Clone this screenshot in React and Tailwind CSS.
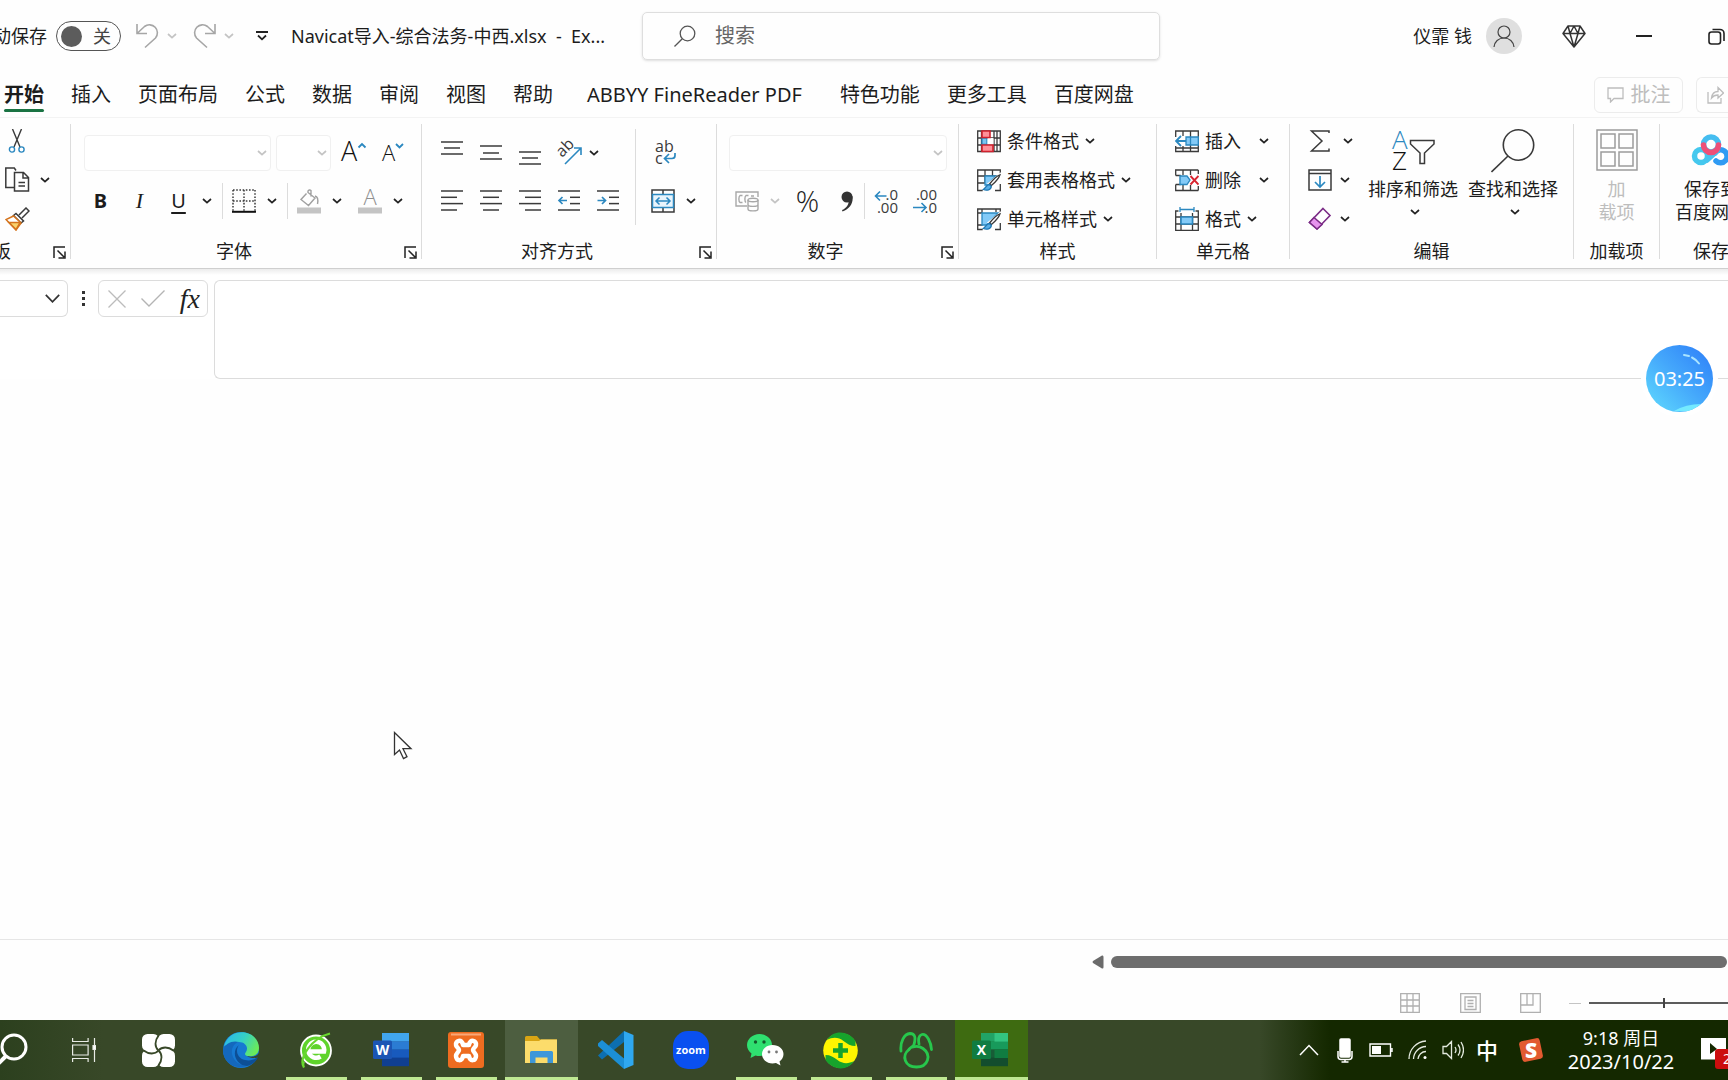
import React from "react";

const BLUE = "#2b88c0";
const INK = "#3a3a3a";

const tabs = ["插入", "页面布局", "公式", "数据", "审阅", "视图", "帮助"];
const moreTabs = ["特色功能", "更多工具", "百度网盘"];

function Chev({ className = "text-[#222]" }) {
  return (
    <svg width="10" height="6" viewBox="0 0 10 6" fill="none" className={className}>
      <path d="M1 1l4 3.6L9 1" stroke="currentColor" strokeWidth="1.7" />
    </svg>
  );
}

function IconButton({ label, className = "w-[39px]", children }) {
  return (
    <button aria-label={label} className={`flex h-9 shrink-0 items-center justify-center ${className}`}>
      {children}
    </button>
  );
}

function ChevButton({ label = "更多选项", className = "w-[18px]", light }) {
  return (
    <IconButton label={label} className={className}>
      <Chev className={light ? "text-[#c4c4c4]" : "text-[#222]"} />
    </IconButton>
  );
}

function Combo({ label, className }) {
  return (
    <div className={`relative h-9 shrink-0 ${className}`}>
      <select aria-label={label} className="h-full w-full appearance-none rounded border border-[#f0f0f0] bg-white" />
      <Chev className="pointer-events-none absolute top-[15px] right-1 text-[#c4c4c4]" />
    </div>
  );
}

function Launcher() {
  return (
    <button aria-label="对话框启动器" className="absolute right-1 bottom-[5px]">
      <svg width="13" height="13" viewBox="0 0 13 13" fill="none" stroke="#222" strokeWidth="1.5">
        <path d="M1 12V1h11M4.5 4.5l6.5 6.5M12 5.5V12H5.5" />
      </svg>
    </button>
  );
}

function Group({ name, className, labelClass = "justify-center", launcher, last, children }) {
  return (
    <>
      <section className={`relative flex h-[146px] shrink-0 flex-col ${className}`}>
        <div className="h-[120px] pt-[3px]">{children}</div>
        <div className={`flex h-[26px] items-center text-lg leading-none whitespace-nowrap ${labelClass}`}>{name}</div>
        {launcher && <Launcher />}
      </section>
      {!last && <div className="mt-[6px] h-[135px] w-px shrink-0 bg-[#dcdcdc]" />}
    </>
  );
}

function InnerSep({ className = "ml-[5px] h-9" }) {
  return <div className={`mr-px w-px shrink-0 bg-[#dcdcdc] ${className}`} />;
}

// horizontal rules, each given as [x1, x2, y]
function Lines({ rows, children }) {
  return (
    <svg width="24" height="24" viewBox="0 0 24 24" fill="none" stroke={INK} strokeWidth="1.5">
      {rows.map(([a, b, y]) => (
        <path key={y} d={`M${a} ${y}H${b}`} />
      ))}
      {children}
    </svg>
  );
}

function TableIcon({ kind }) {
  return (
    <svg width="24" height="24" viewBox="0 0 24 24" fill="none" stroke={INK} strokeWidth="1.3">
      {kind === "cond" && (
        <>
          <path d="M.7 2h22.6v20.5H.7zM.7 9h22.6M.7 16h22.6M4.5 2v20.5M17 2v20.5M20 2v20.5" />
          <path d="M5 9h5v6.5H5z" fill="#7cc4ee" stroke={BLUE} />
          <path d="M10.5 9h6v6.5h-6z" fill="#fff" stroke="none" />
          <path d="M5 2h8v6.5H5zM5 16h11v6.5H5z" fill="#ff9098" stroke="#d0222e" strokeWidth="1.6" />
        </>
      )}
      {(kind === "table" || kind === "cell") && (
        <>
          <path d="M23.3 8V2H.7v20.5h5M18 22.5h5.3V16" />
          {kind === "table" ? (
            <>
              <path d="M.7 8h22.6M.7 15h8M8 2v13M15.5 2v6" />
              <path d="M8 8h11l-9 9H8z" fill="#83caf7" stroke={BLUE} />
            </>
          ) : (
            <>
              <path d="M.7 6h4M.7 18h5M5 2v4M19 2v3" />
              <path d="M5 6h16L10 18H5z" fill="#83caf7" stroke={BLUE} />
            </>
          )}
          <path d="M23.5 6.5L12 16l3 3.5 8.5-10z" fill="#fff" stroke="#fff" strokeWidth="3" />
          <path d="M23 6.8c-3 1-8 6-10.4 9.2l1.8 1.6C17.5 15 22 10 23 6.8z" fill="#fff" />
          <path d="M12.3 16.5c-3 0-2.8 3-6 5 3.5 1.5 8 .5 8-3.2z" fill="#58aee6" stroke="#1f78b4" />
        </>
      )}
      {kind === "insert" && (
        <>
          <path d="M.7 8V2h22.6v20.5H.7V17M.7 19h22M8 2v5M8 17v5.5M15.5 2v20.5" />
          <path d="M11 8h12.3v8H11z" fill="#83caf7" stroke={BLUE} />
          <path d="M15.5 8v8" stroke={BLUE} />
          <path d="M11 12H1.5M6 7l-5 5 5 5" stroke={BLUE} strokeWidth="1.8" />
        </>
      )}
      {kind === "delete" && (
        <>
          <path d="M.7 7.5V2h22.6M.7 7.5h5M.7 16.5h5M.7 16.5v6h22.6M8 2v5M15.5 2v5M8 17v5.5M15.5 17v5.5M23.3 2v4M23.3 18v4.5M5.500 7.5v9" />
          <path d="M5 8h7l3 4-3 4.5H5z" fill="#83caf7" stroke={BLUE} />
          <path d="M15.500 8l8 8.5M23.5 8l-8 8.5" stroke="#d8232f" strokeWidth="1.9" />
        </>
      )}
      {kind === "format" && (
        <>
          <path d="M3.5 4H.7v19.300h22.600V4h-2.800M.7 10h22.6M.7 17h22.6M6 6v17M17.5 6v17" />
          <path d="M6 10h11.5v7H6z" fill="#83caf7" stroke={BLUE} strokeWidth="1.6" />
          <path d="M5 2.500h14M5 0v5M19 0v5" stroke={BLUE} />
        </>
      )}
    </svg>
  );
}

function SmallCommand({ kind, text, wide }) {
  return (
    <button className="flex h-[39px] items-center gap-[6px] text-lg leading-none whitespace-nowrap">
      <TableIcon kind={kind} />
      {text}
      <Chev className={wide ? "ml-3 text-[#222]" : "text-[#222]"} />
    </button>
  );
}

function TitleBar() {
  return (
    <header className="flex h-[72px] shrink-0 items-center overflow-hidden">
      <div className="flex w-[642px] shrink-0 items-center">
        <label htmlFor="autosave" className="flex w-[47px] shrink-0 justify-end overflow-hidden text-lg whitespace-nowrap">
          自动保存
        </label>
        <button
          id="autosave"
          role="switch"
          aria-checked="false"
          className="ml-[9px] flex h-[30px] w-[65px] shrink-0 items-center justify-between rounded-full border border-[#555] pr-[9px] pl-1 text-lg leading-none text-[#444]"
        >
          <span className="size-[21px] rounded-full bg-[#5c5c5c]" />关
        </button>
        <IconButton label="撤消" className="ml-[14px] w-6">
          <svg width="24" height="26" viewBox="0 0 24 26" fill="none" stroke="#a6a6a6" strokeWidth="1.6">
            <path d="M2 1v9.500h10M2 10.500L9.500 3.500a8 8 0 0 1 11 11.500L10 24.500" />
          </svg>
        </IconButton>
        <ChevButton light className="ml-1 w-[18px]" />
        <IconButton label="恢复" className="ml-3 w-6">
          <svg width="24" height="26" viewBox="0 0 24 26" fill="none" stroke="#a6a6a6" strokeWidth="1.6">
            <path d="M22 1v9.500H12M22 10.500L14.500 3.500a8 8 0 0 0-11 11.500L14 24.500" />
          </svg>
        </IconButton>
        <ChevButton light className="ml-[3px] w-[18px]" />
        <IconButton label="自定义快速访问工具栏" className="ml-3 w-6">
          <svg width="12" height="10" viewBox="0 0 12 10" fill="none" stroke="#222" strokeWidth="1.8">
            <path d="M0 1h12M2 4.500l4 3.800 4-3.800" />
          </svg>
        </IconButton>
        <h1 className="ml-[17px] text-lg whitespace-pre">Navicat导入-综合法务-中西.xlsx  -  Ex...</h1>
      </div>
      <label className="flex h-12 w-[518px] shrink-0 items-center rounded-[5px] border border-[#dedede] pl-[31px] shadow-sm">
        <svg width="22" height="22" viewBox="0 0 22 22" fill="none" stroke="#555" strokeWidth="1.3">
          <circle cx="13.5" cy="8.5" r="7.3" />
          <path d="M8.300 13.700L.5 21.500" />
        </svg>
        <input aria-label="搜索" placeholder="搜索" className="ml-[19px] w-96 text-xl outline-none placeholder:text-[#666]" />
      </label>
      <div className="-mr-1 flex flex-1 items-center justify-end">
        <button className="flex shrink-0 items-center gap-[14px] text-lg whitespace-nowrap">
          仪霏 钱
          <span className="flex size-9 items-center justify-center rounded-full bg-[#dfdfdf]">
            <svg width="22" height="24" viewBox="0 0 22 24" fill="none" stroke="#444" strokeWidth="1.2">
              <circle cx="11" cy="8" r="6" />
              <path d="M1 23c.5-5.500 4.500-9 10-9s9.500 3.500 10 9" />
            </svg>
          </span>
        </button>
        <IconButton label="会员" className="ml-8 w-10">
          <svg width="24" height="23" viewBox="0 0 24 23" fill="none" stroke="#333" strokeWidth="1.5" strokeLinejoin="round">
            <path d="M6 1h12l5 7.500L12 22 1 8.500zM1 8.500h22M6 1l2 7.500L12 22l4-13.500L18 1M8 8.500L12 1l4 7.500" />
          </svg>
        </IconButton>
        <IconButton label="最小化" className="ml-[34px] w-8">
          <span className="h-[2px] w-4 bg-[#222]" />
        </IconButton>
        <IconButton label="还原" className="ml-10 w-8">
          <svg width="17" height="17" viewBox="0 0 17 17" fill="none" stroke="#222" strokeWidth="1.6">
            <rect x="1" y="4" width="11.5" height="12" rx="2.5" />
            <path d="M4.500 1.500h7.500a4 4 0 0 1 4 4V13" />
          </svg>
        </IconButton>
      </div>
    </header>
  );
}

function TabBar() {
  return (
    <nav className="flex h-[46px] shrink-0 items-center overflow-hidden border-b border-[#f3f3f3] pl-1 text-xl whitespace-nowrap">
      <div className="flex gap-[27px]">
        <button className="relative font-bold">
          开始
          <span className="absolute inset-x-0 -bottom-[3px] h-[3px] rounded-full bg-[#1a7343]" />
        </button>
        {tabs.map((t) => (
          <button key={t}>{t}</button>
        ))}
      </div>
      <button className="mr-[38px] ml-[34px]">ABBYY FineReader PDF</button>
      <div className="flex gap-[27px]">
        {moreTabs.map((t) => (
          <button key={t}>{t}</button>
        ))}
      </div>
      <div className="ml-auto flex gap-[13px] text-[#bdbdbd]">
        <button className="flex h-9 w-[89px] items-center justify-center gap-[7px] rounded-md border border-[#ececec]">
          <svg width="17" height="16" viewBox="0 0 17 16" fill="none" stroke="currentColor" strokeWidth="1.3">
            <path d="M1 1h15v10.500H7L3.500 15v-3.500H1z" />
          </svg>
          批注
        </button>
        <button aria-label="共享" className="flex h-9 w-8 items-center justify-end rounded-l-md border border-r-0 border-[#ececec] pr-1">
          <svg width="17" height="18" viewBox="0 0 17 18" fill="none" stroke="currentColor" strokeWidth="1.3">
            <path d="M1 6v11h13v-5M4.500 12c.5-4 3-6.500 6.500-6.500V1.500l5.500 5.500L11 12V9c-3 0-5 1-6.500 3z" />
          </svg>
        </button>
      </div>
    </nav>
  );
}

function ClipboardGroup() {
  return (
    <Group name="剪贴板" className="w-[70px]" labelClass="justify-end pr-[59px]" launcher>
      <div className="flex flex-col items-start pl-[5px]">
        <button aria-label="剪切" className="flex h-[39px] w-6 items-center justify-center">
          <svg width="18" height="24" viewBox="0 0 18 24" fill="none" strokeWidth="1.4">
            <path d="M4.500 0L12 18M13.500 0L6 18" stroke={INK} />
            <circle cx="4" cy="20.5" r="2.6" stroke={BLUE} />
            <circle cx="13.5" cy="20.5" r="2.6" stroke={BLUE} />
          </svg>
        </button>
        <div className="flex h-[39px] items-center">
          <button aria-label="复制">
            <svg width="25" height="25" viewBox="0 0 25 25" fill="none" stroke={INK} strokeWidth="1.5">
              <path d="M9 20.500H.8V1h8.500L11 3.500M9.500 5.500h9l5 5V24h-14zM18 5.500V11h5.500M13.500 15.500h6.500M13.500 19h6.500" />
            </svg>
          </button>
          <ChevButton className="ml-[6px] w-[18px]" />
        </div>
        <button aria-label="格式刷" className="flex h-[39px] items-center">
          <svg width="25" height="24" viewBox="0 0 25 24" fill="none" strokeWidth="1.5">
            <path d="M14 8l7-7 3 3-7 7M11 6.500l7.500 7.500-2.500 2-7.500-7.500z" fill="#fff" stroke={INK} />
            <path d="M8.500 9L1 12.500 11 23l5-7z" fill="#fff" stroke="#d4731c" />
            <path d="M4 15.500h11L11 22.500z" fill="#f9d26b" stroke="#d4731c" />
          </svg>
        </button>
      </div>
    </Group>
  );
}

function FontGroup() {
  return (
    <Group name="字体" className="w-[350px]" labelClass="justify-center pr-6" launcher>
      <div className="pt-2 pl-[10px]">
        <div className="flex h-12 items-center pl-[3px]">
          <Combo label="字体" className="w-[187px]" />
          <Combo label="字号" className="mr-[3px] ml-[5px] w-[55px]" />
          <IconButton label="增大字号">
            <svg className="overflow-visible" width="26" height="24" viewBox="0 0 26 24" fill="none">
              <text x="0" y="20" fontSize="27" fontFamily="Open Sans" fontWeight="300" fill="#111">A</text>
              <path d="M17.500 6.500l3.500-3.500 3.500 3.500" stroke={BLUE} strokeWidth="1.8" />
            </svg>
          </IconButton>
          <IconButton label="减小字号">
            <svg className="overflow-visible" width="22" height="24" viewBox="0 0 22 24" fill="none">
              <text x="0" y="20" fontSize="22" fontFamily="Open Sans" fontWeight="300" fill="#111">A</text>
              <path d="M14 3l3.500 3.500L21 3" stroke={BLUE} strokeWidth="1.8" />
            </svg>
          </IconButton>
        </div>
        <div className="flex h-12 items-center text-xl">
          <IconButton label="加粗"><b>B</b></IconButton>
          <IconButton label="倾斜"><i className="font-[Liberation_Serif,serif] text-[22px]">I</i></IconButton>
          <IconButton label="下划线"><span className="underline underline-offset-4">U</span></IconButton>
          <ChevButton />
          <InnerSep className="ml-[6px] h-9" />
          <IconButton label="边框">
            <svg width="24" height="24" viewBox="0 0 24 24" fill="none" stroke={INK} strokeWidth="1.5">
              <path d="M1 1h22M1 12h22M1 1v22M12 1v22M23 1v22" strokeDasharray="1.6 1.6" />
              <path d="M0 22.800h24" stroke="#111" strokeWidth="2" />
            </svg>
          </IconButton>
          <ChevButton />
          <InnerSep className="ml-[6px] h-9" />
          <IconButton label="填充颜色">
            <svg width="24" height="25" viewBox="0 0 24 25" fill="none" stroke="#a0a0a0" strokeWidth="1.4">
              <path d="M9.500 4.500L4 10.500l7.500 6L18 9l-7-5.500V2a2 2 0 0 1 3-.5v6M18 7c2 .5 3.500 3 2.500 8" />
              <path d="M0 21.500h24" stroke="#c4c4c4" strokeWidth="6" />
            </svg>
          </IconButton>
          <ChevButton />
          <IconButton label="字体颜色" className="ml-1 w-[39px]">
            <svg className="overflow-visible" width="24" height="25" viewBox="0 0 24 25">
              <text x="12" y="16" textAnchor="middle" fontSize="22" fontFamily="Open Sans" fontWeight="300" fill="#909090">A</text>
              <path d="M0 21.500h24" stroke="#c4c4c4" strokeWidth="6" />
            </svg>
          </IconButton>
          <ChevButton />
        </div>
      </div>
    </Group>
  );
}

function AlignGroup() {
  return (
    <Group name="对齐方式" className="w-[294px]" labelClass="justify-center pr-6" launcher>
      <div className="flex pt-2 pl-[10px]">
        <div className="w-[195px]">
          <div className="flex h-12 items-center">
            <IconButton label="顶端对齐"><Lines rows={[[1, 23, 1], [4, 20, 7], [1, 23, 13]]} /></IconButton>
            <IconButton label="垂直居中"><Lines rows={[[1, 23, 5], [4, 20, 12], [1, 23, 18]]} /></IconButton>
            <IconButton label="底端对齐"><Lines rows={[[1, 23, 11], [4, 20, 17], [1, 23, 23]]} /></IconButton>
            <IconButton label="方向">
              <svg className="overflow-visible" width="26" height="26" viewBox="0 0 26 26" fill="none">
                <text x="6" y="18" transform="rotate(-45 6 18)" fontSize="16" fontFamily="Open Sans" fill={INK}>ab</text>
                <path d="M9 24L25 8M18 8h7v7" stroke={BLUE} strokeWidth="1.6" />
              </svg>
            </IconButton>
            <ChevButton className="-ml-[3px] w-[18px]" />
          </div>
          <div className="flex h-12 items-center">
            <IconButton label="左对齐"><Lines rows={[[1, 23, 2], [1, 17, 8.3], [1, 23, 14.6], [1, 17, 21]]} /></IconButton>
            <IconButton label="居中"><Lines rows={[[1, 23, 2], [4, 20, 8.3], [1, 23, 14.6], [4, 20, 21]]} /></IconButton>
            <IconButton label="右对齐"><Lines rows={[[1, 23, 2], [7, 23, 8.3], [1, 23, 14.6], [7, 23, 21]]} /></IconButton>
            <IconButton label="减少缩进量">
              <Lines rows={[[1, 23, 2], [13, 23, 8.3], [13, 23, 14.6], [1, 23, 21]]}>
                <path d="M10 11.500H2M5.500 8L2 11.500 5.500 15" stroke={BLUE} strokeWidth="1.7" />
              </Lines>
            </IconButton>
            <IconButton label="增加缩进量">
              <Lines rows={[[1, 23, 2], [13, 23, 8.3], [13, 23, 14.6], [1, 23, 21]]}>
                <path d="M1.500 11.500h8M6 8l3.500 3.500L6 15" stroke={BLUE} strokeWidth="1.7" />
              </Lines>
            </IconButton>
          </div>
        </div>
        <InnerSep className="ml-2 h-24" />
        <div className="pl-[6px]">
          <div className="flex h-12 items-center">
            <IconButton label="自动换行" className="w-11">
              <svg className="overflow-visible" width="24" height="26" viewBox="0 0 24 26" fill="none">
                <text x="2" y="12" fontSize="16" fontFamily="Open Sans" fill={INK}>ab</text>
                <text x="2" y="24" fontSize="16" fontFamily="Open Sans" fill={INK}>c</text>
                <path d="M22 13v2.500a3 3 0 0 1-3 3h-7M16 14l-4.500 4.500L16 23" stroke={BLUE} strokeWidth="1.7" />
              </svg>
            </IconButton>
          </div>
          <div className="flex h-12 items-center">
            <IconButton label="合并后居中">
              <svg width="24" height="24" viewBox="0 0 24 24" fill="none" stroke={INK} strokeWidth="1.5">
                <path d="M1 1h22v22H1zM12 1v5M12 18v5" />
                <path d="M1.500 5.500h21v13h-21z" fill="#e8f4fc" stroke={BLUE} />
                <path d="M5 12h14M8.500 8.500L5 12l3.500 3.500M15.500 8.500L19 12l-3.500 3.500" stroke={BLUE} />
              </svg>
            </IconButton>
            <ChevButton />
          </div>
        </div>
      </div>
    </Group>
  );
}

function NumberGroup() {
  return (
    <Group name="数字" className="w-[241px]" labelClass="justify-center pr-6" launcher>
      <div className="pt-2 pl-[10px]">
        <div className="flex h-12 items-center pl-[2px]">
          <Combo label="数字格式" className="w-[218px]" />
        </div>
        <div className="flex h-12 items-center">
          <IconButton label="会计数字格式">
            <svg width="24" height="22" viewBox="0 0 24 22" fill="none" stroke="#a8a8a8" strokeWidth="1.4">
              <path d="M23 7V2H1v14h11M7.500 5.500H5c-1.500 1-1.500 6 0 7h2.500M13.500 5.500H11c-1.500 1-1.500 6 0 7M16 6h3" />
              <ellipse cx="18" cy="10" rx="5" ry="1.8" />
              <path d="M13 10v9c0 2.500 10 2.500 10 0v-9M13 14.500c0 2.500 10 2.500 10 0" />
            </svg>
          </IconButton>
          <ChevButton light />
          <IconButton label="百分比样式" className="ml-1 w-[39px] font-['Open_Sans',sans-serif] text-[29px] font-light">%</IconButton>
          <IconButton label="千位分隔样式">
            <svg width="12" height="21" viewBox="0 0 12 21" fill="#333">
              <circle cx="6" cy="6" r="5.5" />
              <path d="M11.500 5c1 7-2.500 13-10 15.500L1 19C5.500 17 8.500 13 7.500 8z" />
            </svg>
          </IconButton>
          <InnerSep className="-ml-0.5 h-9" />
          <IconButton label="增加小数位数">
            <svg className="overflow-visible" width="24" height="25" viewBox="0 0 24 25" fill="none">
              <text x="24" y="11" textAnchor="end" fontSize="15" fontFamily="Open Sans" fill={INK}>.0</text>
              <text x="24" y="24" textAnchor="end" fontSize="15" fontFamily="Open Sans" fill={INK}>.00</text>
              <path d="M12.500 7H2M6 2.500L1.500 7 6 11.500" stroke={BLUE} strokeWidth="1.6" />
            </svg>
          </IconButton>
          <IconButton label="减少小数位数">
            <svg className="overflow-visible" width="24" height="25" viewBox="0 0 24 25" fill="none">
              <text x="24" y="11" textAnchor="end" fontSize="15" fontFamily="Open Sans" fill={INK}>.00</text>
              <text x="24" y="24" textAnchor="end" fontSize="15" fontFamily="Open Sans" fill={INK}>.0</text>
              <path d="M0 18.500h12M8.500 14l4.500 4.500L8.500 23" stroke={BLUE} strokeWidth="1.6" />
            </svg>
          </IconButton>
        </div>
      </div>
    </Group>
  );
}

function BigSearchCommand({ text, children }) {
  return (
    <button className="flex w-[90px] flex-col items-center pt-2 text-lg leading-none whitespace-nowrap">
      {children}
      <span className="mt-[7px]">{text}</span>
      <Chev className="mt-[11px] ml-1 text-[#222]" />
    </button>
  );
}

function EditGroup() {
  return (
    <Group name="编辑" className="w-[283px]">
      <div className="flex pl-[18px]">
        <div className="flex w-[42px] flex-col">
          <button aria-label="自动求和" className="flex h-[39px] w-[45px] items-center justify-between">
            <svg width="24" height="24" viewBox="0 0 24 24" fill="none" stroke={INK} strokeWidth="1.5">
              <path d="M21 4V2H3.500L14 12 3.500 22H21v-2.500" />
            </svg>
            <Chev />
          </button>
          <button aria-label="填充" className="flex h-[39px] items-center justify-between">
            <svg width="24" height="24" viewBox="0 0 24 24" fill="none" stroke={INK} strokeWidth="1.5">
              <path d="M1 2h22v20H1zM1 5.500h22" />
              <path d="M12 8v10.500M7 14l5 5 5-5" stroke={BLUE} strokeWidth="1.7" />
            </svg>
            <Chev />
          </button>
          <button aria-label="清除" className="flex h-[39px] items-center justify-between">
            <svg width="24" height="24" viewBox="0 0 24 24" stroke="#7b2c86" strokeWidth="1.6">
              <path d="M15 1.500l7 7L9 22l-7.500-6.500z" fill="#fff" />
              <path d="M6 10.500l8 7L9 22l-7.500-6.500z" fill="#e794ee" />
            </svg>
            <Chev />
          </button>
        </div>
        <div className="ml-[18px] flex gap-[10px]">
          <BigSearchCommand text="排序和筛选">
            <svg className="overflow-visible" width="44" height="44" viewBox="0 0 44 44" fill="none">
              <text x="1" y="20" fontSize="26" fontFamily="Open Sans" fontWeight="300" fill={BLUE}>A</text>
              <text x="1" y="41" fontSize="26" fontFamily="Open Sans" fontWeight="300" fill="#111">Z</text>
              <path d="M19.500 11.500H43V15l-9.500 9v10.500H29V24l-9.500-9z" stroke={INK} strokeWidth="1.5" />
            </svg>
          </BigSearchCommand>
          <BigSearchCommand text="查找和选择">
            <svg width="44" height="44" viewBox="0 0 44 44" fill="none" stroke={INK} strokeWidth="1.6">
              <circle cx="27.5" cy="16" r="15.2" />
              <path d="M17 27L.5 43" />
            </svg>
          </BigSearchCommand>
        </div>
      </div>
    </Group>
  );
}

function Ribbon() {
  return (
    <div className="flex h-[151px] shrink-0 overflow-hidden border-b border-[#cfcfcf]">
      <ClipboardGroup />
      <FontGroup />
      <AlignGroup />
      <NumberGroup />
      <Group name="样式" className="w-[197px]">
        <div className="flex flex-col items-start pl-[18px]">
          <SmallCommand kind="cond" text="条件格式" />
          <SmallCommand kind="table" text="套用表格格式" />
          <SmallCommand kind="cell" text="单元格样式" />
        </div>
      </Group>
      <Group name="单元格" className="w-[132px]">
        <div className="flex flex-col items-start pl-[18px]">
          <SmallCommand kind="insert" text="插入" wide />
          <SmallCommand kind="delete" text="删除" wide />
          <SmallCommand kind="format" text="格式" />
        </div>
      </Group>
      <EditGroup />
      <Group name="加载项" className="w-[85px]">
        <button className="flex w-full flex-col items-center pt-2 text-lg leading-[23px] text-[#bdbdbd]">
          <svg width="42" height="42" viewBox="0 0 42 42" fill="none" stroke="#9c9c9c" strokeWidth="1.5">
            <path d="M1 1h40v40H1zM5 5h14v14H5zM23 5h14v14H23zM5 23h14v14H5zM23 23h14v14H23z" />
          </svg>
          <span className="mt-[7px]">加<br />载项</span>
        </button>
      </Group>
      <Group name="保存" className="w-[102px]" last>
        <button className="flex w-full flex-col items-center pt-2 text-lg leading-[23px] whitespace-nowrap">
          <svg width="42" height="42" viewBox="0 0 42 42" fill="none" strokeWidth="5.5" strokeLinecap="round">
            <circle cx="11" cy="27" r="6.5" stroke="#45c8ee" />
            <path d="M25 24a6.500 6.500 0 1 1 1 8" stroke="#2f9bf3" />
            <path d="M17 31L27 22" stroke="#46c4ef" />
            <circle cx="21" cy="15.5" r="7.5" stroke="#45bdf0" />
            <path d="M13.500 16a7.500 7.500 0 0 0 15 0" stroke="#ee4f78" />
          </svg>
          <span className="mt-[7px]">保存到<br />百度网盘</span>
        </button>
      </Group>
    </div>
  );
}

function FormulaBar() {
  return (
    <div className="relative flex shrink-0 items-start bg-linear-to-b from-[#ececec] from-0% to-white to-[6px] pt-[11px]">
      <div className="flex h-[37px] w-[68px] shrink-0 items-center rounded-r-md border border-l-0 border-[#dcdcdc] bg-white pr-[7px]">
        <input aria-label="名称框" className="w-9 min-w-0 flex-1 outline-none" />
        <svg width="15" height="9" viewBox="0 0 15 9" fill="none" stroke="#333" strokeWidth="1.7">
          <path d="M.8.8l6.700 7 6.700-7" />
        </svg>
      </div>
      <div className="flex h-[37px] w-[30px] shrink-0 flex-col items-center justify-center gap-[3px]">
        <span className="size-[3px] bg-[#333]" />
        <span className="size-[3px] bg-[#333]" />
        <span className="size-[3px] bg-[#333]" />
      </div>
      <div className="flex h-[37px] w-[110px] shrink-0 items-center justify-between rounded-md border border-[#dcdcdc] bg-white pr-[7px] pl-[9px]">
        <button aria-label="取消">
          <svg width="18" height="18" viewBox="0 0 18 18" stroke="#bcbcbc" strokeWidth="1.3">
            <path d="M.5.5l17 17M17.500.5l-17 17" />
          </svg>
        </button>
        <button aria-label="输入">
          <svg width="24" height="17" viewBox="0 0 24 17" fill="none" stroke="#b4b4b4" strokeWidth="1.4">
            <path d="M.5 8.500l7.500 7.500L23.500.5" />
          </svg>
        </button>
        <button aria-label="插入函数" className="font-['Liberation_Serif',serif] text-[28px] leading-8 text-[#222] italic">
          fx
        </button>
      </div>
      <textarea aria-label="编辑栏" className="ml-[6px] h-[99px] flex-1 resize-none rounded-l-md border border-r-0 border-[#dcdcdc] bg-white outline-none" />
      <div className="absolute right-[10px] bottom-[-38px] rounded-full bg-white p-[5px]">
        <div className="relative flex size-[67px] items-center justify-center overflow-hidden rounded-full bg-linear-to-tr from-[#62dcfd] via-[#45a8fb] to-[#2e7bf8] text-xl text-white">
          03:25
          <svg className="absolute inset-0" width="67" height="67" viewBox="0 0 67 67" fill="none">
            <path d="M38 10l5 1M46 12.500q4 2 7 6" stroke="#a9e4ff" strokeWidth="2" strokeLinecap="round" />
            <path d="M28 66q12-7 27-7l-9 7z" fill="#74eaff" />
          </svg>
        </div>
      </div>
    </div>
  );
}

function StatusArea() {
  return (
    <div className="shrink-0 overflow-hidden border-t border-[#e6e6e6]">
      <div className="flex h-[44px] items-center justify-end pr-px">
        <button aria-label="向左滚动" className="mr-[7px]">
          <svg width="12" height="14" viewBox="0 0 12 14" fill="#6b6b6b">
            <path d="M10 .5Q11.500 0 11.500 2v10q0 2-1.500 1.500L1 8Q0 7 1 6z" />
          </svg>
        </button>
        <div className="h-3 w-[616px] rounded-full bg-[#6e6e6e]" />
      </div>
      <div className="flex h-9 items-center justify-end pt-[2px] text-[#b0b0b0]">
        <button aria-label="普通">
          <svg width="20" height="20" viewBox="0 0 20 20" fill="none" stroke="currentColor" strokeWidth="1.3">
            <path d="M.7.7h18.600v18.600H.7zM.7 7h18.600M.7 13h18.600M7 .7v18.600M13 .7v18.600" />
          </svg>
        </button>
        <button aria-label="页面布局" className="ml-10">
          <svg width="21" height="20" viewBox="0 0 21 20" fill="none" stroke="currentColor" strokeWidth="1.3">
            <path d="M.7.7h19.600v18.600H.7zM5 4h11v12.500H5zM7.500 7.500h6M7.500 10.500h6M7.500 13.500h6" />
          </svg>
        </button>
        <button aria-label="分页预览" className="ml-[39px]">
          <svg width="21" height="20" viewBox="0 0 21 20" fill="none" stroke="currentColor" strokeWidth="1.3">
            <path d="M.7.7h19.600v18.600H.7zM.7 12h12.300V.7M7 .7V12" />
          </svg>
        </button>
        <button aria-label="缩小" className="ml-7 flex h-5 w-3 items-center">
          <span className="h-px w-3 bg-[#c4c4c4]" />
        </button>
        <input
          type="range"
          aria-label="缩放"
          className="-mr-[11px] ml-2 h-[2px] w-[150px] appearance-none bg-[#5c5c5c] [&::-webkit-slider-thumb]:h-[10px] [&::-webkit-slider-thumb]:w-[2px] [&::-webkit-slider-thumb]:appearance-none [&::-webkit-slider-thumb]:bg-[#444]"
        />
      </div>
    </div>
  );
}

function OfficeIcon({ letter, colors, badge }) {
  return (
    <svg width="36" height="34" viewBox="0 0 36 34">
      {colors.map((c, i) => (
        <rect key={c} x="9" y={i * 8.2} width="27" height="8.6" fill={c} />
      ))}
      {letter === "X" && (
        <>
          <rect x="22.5" width="13.5" height="8.6" fill="#33c481" />
          <rect x="22.5" y="16.4" width="13.5" height="8.6" fill="#107c41" />
        </>
      )}
      <rect x="0" y="7.5" width="19" height="18.5" rx="1.5" fill={badge} />
      <text x="9.5" y="22" textAnchor="middle" fontSize="14" fontWeight="700" fontFamily="Open Sans" fill="#fff">{letter}</text>
    </svg>
  );
}

const appIcons = {
  edge: (
    <svg width="36" height="36" viewBox="0 0 36 36">
      <defs>
        <linearGradient id="edgeTop" x1="0" x2="1" y1="0.2" y2="0.6">
          <stop offset="0" stopColor="#2bb8ea" />
          <stop offset=".5" stopColor="#35d0c5" />
          <stop offset="1" stopColor="#6cec55" />
        </linearGradient>
      </defs>
      <circle cx="18" cy="18" r="18" fill="#1679d2" />
      <path d="M1 14C4 3 14-1 22 .5 31 2 36 9 36 16c0 6-5 9-10 8-4 0-5-2-3-4 3-5-1-10-7-10-7 0-12 3-15 4z" fill="url(#edgeTop)" />
      <path d="M0 18c2-7 10-10 16-8-6 1-9 9-6 15 3 7 10 9 16 8C14 39 0 32 0 18z" fill="#1468bd" />
      <path d="M16 13c-4 5-2 13 6 15 5 1 9 0 13-3-2 5-6 8-11 9-12-1-16-15-8-21z" fill="#0d4f96" />
      <path d="M24 24c4 1.500 9 1 12-3v4c-2 1-8 2-12-1z" fill="#384828" />
    </svg>
  ),
  browser360: (
    <svg width="36" height="36" viewBox="0 0 36 36" fill="none">
      <circle cx="18" cy="18.5" r="15" fill="#5fd32b" stroke="#fff" strokeWidth="1.8" />
      <path d="M12 19.500h14a8 8 0 1 0-3.500 5" stroke="#fff" strokeWidth="4.5" />
      <path d="M6 35.500C0 26 14 6 32 1.500M6 35.500c-1-2-1-4 0-6" stroke="#69d82e" strokeWidth="2.2" />
    </svg>
  ),
  word: <OfficeIcon letter="W" badge="#1b55b4" colors={["#41a5ee", "#2b7cd3", "#185abd", "#103f91"]} />,
  xampp: (
    <svg width="36" height="36" viewBox="0 0 36 36" fill="none">
      <rect width="36" height="36" rx="3" fill="#ee6c20" />
      <path d="M3 2.500h30" stroke="#f8a878" strokeWidth="2" />
      <path d="M18 13h-3c-1-7-8-4-7 0 0 2 3 3 3 5s-3 3-3 6c0 5 6 6 7 0h6c1 6 7 5 7 0 0-3-3-4-3-6s3-3 3-5c1-4-6-7-7 0z" stroke="#fff" strokeWidth="4.5" strokeLinejoin="round" />
    </svg>
  ),
  explorer: (
    <svg width="34" height="30" viewBox="0 0 34 30">
      <path d="M1 2.500Q1 1 2.500 1H13l3 3.500h17V28H1z" fill="#d9a514" />
      <path d="M1 6h14l2-1.500h16V28H1z" fill="#fcdc6b" />
      <path d="M6 28V17.500Q6 16 7.500 16h20q1.500 0 1.500 1.500V28h-5.500v-5.500h-12V28z" fill="#3e97d9" />
    </svg>
  ),
  vscode: (
    <svg width="37" height="38" viewBox="0 0 37 38">
      <path d="M1 24.500L27 0v11L5 28.500z" fill="#0d6fb0" />
      <path d="M1 12.500L5 9l22 18.500V38L1 15z" fill="#1c8fd6" />
      <path d="M27 0l9.500 4v30L27 38z" fill="#2fa8f0" />
    </svg>
  ),
  zoom: (
    <svg width="36" height="38" viewBox="0 0 36 38">
      <rect width="36" height="38" rx="15" fill="#0a50f0" />
      <text x="18" y="22.5" textAnchor="middle" fontSize="11" fontWeight="700" fontFamily="Open Sans" fill="#fff">zoom</text>
    </svg>
  ),
  wechat: (
    <svg width="37" height="32" viewBox="0 0 37 32">
      <path d="M12.500 0C5.500 0 0 5 0 11c0 3.500 1.800 6.500 4.500 8.500L3.500 24l5-2.500c1.300.4 2.600.5 4 .5C19.500 22 25 17 25 11S19.500 0 12.500 0z" fill="#2fe070" />
      <circle cx="8.5" cy="8" r="1.7" fill="#145c2d" />
      <circle cx="17" cy="8" r="1.7" fill="#145c2d" />
      <path d="M25.500 11C19.500 11 15 15 15 20s4.500 9.500 10.500 9.500c1.200 0 2.500-.2 3.500-.5l4.500 2.500-1-4c2.500-1.700 4-4.500 4-7.500 0-5-4.500-9-11-9z" fill="#fff" />
      <circle cx="22" cy="18" r="1.4" fill="#777" />
      <circle cx="29.5" cy="18" r="1.4" fill="#777" />
    </svg>
  ),
  safe360: (
    <svg width="35" height="37" viewBox="0 0 35 37">
      <circle cx="17.5" cy="18.5" r="17.3" fill="#fff500" />
      <path d="M4 8C10-2 25-2 32.500 9v5c-5 0-8-2-12-5-5-4-11-4-16.500-1zM31 29C25 39 10 39 2.500 28v-5c5 0 8 2 12 5 5 4 11 4 16.500 1z" fill="#17a32c" />
      <path d="M17.500 11v15M10 18.500h15" stroke="#17a32c" strokeWidth="4.5" />
    </svg>
  ),
  navicat: (
    <svg width="34" height="38" viewBox="0 0 34 38" fill="none" stroke="#27c74c" strokeWidth="2.8" strokeLinecap="round">
      <path d="M10 18.500C2 25 6 36 17.500 36S33 24 24 17.500c-3-2-7-2.500-10-1.500" />
      <path d="M2 20C1 11 5 3 11 2.500c5 0 6 4 4 11-.5 2-4 3-5 5M20 13c-1-5 0-8.500 3-9.500 5-1 9 8 9.500 15" />
    </svg>
  ),
  excel: <OfficeIcon letter="X" badge="#107c41" colors={["#21a366", "#189a5b", "#185c37", "#134d2e"]} />,
};

const apps = [
  { id: "edge", name: "Microsoft Edge", state: "closed" },
  { id: "browser360", name: "360安全浏览器", state: "open" },
  { id: "word", name: "Word", state: "open" },
  { id: "xampp", name: "XAMPP", state: "open" },
  { id: "explorer", name: "文件资源管理器", state: "focus" },
  { id: "vscode", name: "Visual Studio Code", state: "closed" },
  { id: "zoom", name: "Zoom", state: "closed" },
  { id: "wechat", name: "微信", state: "open" },
  { id: "safe360", name: "360安全卫士", state: "open" },
  { id: "navicat", name: "Navicat", state: "open" },
  { id: "excel", name: "Excel", state: "active" },
];

const cellStyles = {
  closed: "pr-0.5",
  open: "pr-0.5",
  focus: "bg-[#4d5e40] pr-0.5",
  active: "bg-[#3e6b11] pr-1",
};

function Taskbar() {
  return (
    <footer className="flex h-[60px] shrink-0 overflow-hidden bg-linear-to-r from-[#2c401e] via-[#384828] via-6% to-[#384828] text-white">
      <button aria-label="搜索" className="w-[46px] shrink-0">
        <svg width="30" height="34" viewBox="0 0 30 34" fill="none" stroke="#fff" strokeWidth="3">
          <circle cx="14" cy="14" r="12" />
          <path d="M6 23l-8 8" strokeWidth="4" />
        </svg>
      </button>
      <button aria-label="任务视图" className="flex w-[75px] shrink-0 items-center justify-center">
        <svg width="24" height="24" viewBox="0 0 24 24" fill="none" stroke="#e8ebe5" strokeWidth="1.2">
          <path d="M.6 0v3.500h15.500V0M.6 24v-3.500h15.500V24M.6 7h15.500v10H.6zM22.500 0v24" />
          <path d="M21 7.500h3v4h-3z" fill="#fff" />
        </svg>
      </button>
      <button aria-label="云应用" className="mr-2 flex w-[75px] shrink-0 items-center justify-center">
        <svg width="33" height="33" viewBox="0 0 33 33" fill="#fff">
          <rect x="0" y="0" width="17" height="17" rx="5.5" />
          <rect x="16" y="0" width="17" height="17" rx="5.5" />
          <rect x="0" y="16" width="17" height="17" rx="5.5" />
          <rect x="16" y="16" width="17" height="17" rx="5.5" />
          <circle cx="16.5" cy="16.5" r="6" />
          {[0, 90, 180, 270].map((r) => (
            <path key={r} transform={`rotate(${r} 16.5 16.5)`} d="M16.500 16.500C12.500 13 12.500 7 16.500 1.500" fill="none" stroke="#384828" strokeWidth="1.8" />
          ))}
        </svg>
      </button>
      {apps.map((app) => (
        <button key={app.id} aria-label={app.name} className="relative w-[75px] shrink-0 px-px">
          <span className={`flex h-full w-full items-center justify-center ${cellStyles[app.state]}`}>{appIcons[app.id]}</span>
          {app.state !== "closed" && (
            <span className={`absolute bottom-0 h-[3px] bg-[#bfe893] ${app.state === "open" ? "inset-x-[7px]" : "inset-x-px"}`} />
          )}
        </button>
      ))}
      <div className="flex flex-1 items-center justify-end bg-linear-to-r from-[#384828] from-33% to-[#142800] to-43%">
        <IconButton label="显示隐藏的图标" className="w-9">
          <svg width="20" height="12" viewBox="0 0 20 12" fill="none" stroke="#fff" strokeWidth="1.5"><path d="M1 11l9-9.500L19 11" /></svg>
        </IconButton>
        <IconButton label="麦克风" className="w-9">
          <svg width="16" height="25" viewBox="0 0 16 25" fill="none" stroke="#fff" strokeWidth="1.5">
            <rect x="3" y="1" width="10" height="18" rx="1" fill="#fff" />
            <path d="M1 13v5.500c0 2 1 3 3 3h8c2 0 3-1 3-3V13M8 21v3M4.500 24h7" />
          </svg>
        </IconButton>
        <IconButton label="电池" className="w-9">
          <svg width="24" height="14" viewBox="0 0 24 14" fill="none" stroke="#fff" strokeWidth="1.4">
            <path d="M1 1h20.500v12H1zM23 5v4" />
            <path d="M3 3h9v8H3z" fill="#fff" stroke="none" />
          </svg>
        </IconButton>
        <IconButton label="网络" className="w-9">
          <svg width="19" height="20" viewBox="0 0 19 20" fill="none" stroke="#e4eadf" strokeWidth="1.3">
            <path d="M1 19A18 18 0 0 1 18 1M5.500 19A13 13 0 0 1 18 6.500M10 19a8 8 0 0 1 8-7.500" />
            <circle cx="17" cy="17.5" r="1.5" fill="#fff" stroke="none" />
          </svg>
        </IconButton>
        <IconButton label="音量" className="w-9">
          <svg width="22" height="20" viewBox="0 0 22 20" fill="none" stroke="#e4eadf" strokeWidth="1.3">
            <path d="M1 6.500h3.500l5-5v17l-5-5H1zM13 7q2 3 0 6M16 4.500q4 5.500 0 11M19 2q5 8 0 16" />
          </svg>
        </IconButton>
        <button className="w-9 pr-1 text-[22px] font-medium">中</button>
        <IconButton label="搜狗输入法" className="ml-[6px] w-9">
          <svg width="26" height="26" viewBox="0 0 26 26">
            <rect x="2.500" y="2.500" width="21" height="21" rx="3" fill="#e25a30" transform="rotate(-12 13 13)" />
            <text x="13" y="20.5" textAnchor="middle" fontSize="21" fontWeight="800" fontFamily="Open Sans" fill="#fff">S</text>
          </svg>
        </IconButton>
        <button className="ml-4 w-28 text-center text-lg leading-[23px] whitespace-nowrap">
          9:18 周日
          <span className="block text-xl leading-[23px]">2023/10/22</span>
        </button>
        <button aria-label="通知" className="relative ml-6 w-[27px] self-stretch overflow-hidden">
          <svg className="absolute top-[18px] left-0" width="25" height="22" viewBox="0 0 25 22">
            <path d="M0 0h25v21.500H0z" fill="#fff" />
            <path d="M9 5l7 6-7 5z" fill="#142800" />
          </svg>
          <span className="absolute top-[29px] left-[14px] h-5 w-5 rounded-[3px] bg-[#cc0e0e] pl-2 text-left text-sm leading-5">2</span>
        </button>
      </div>
    </footer>
  );
}

export default function App() {
  return (
    <div className="flex h-screen flex-col overflow-hidden bg-[#fefefe] font-['Noto_Sans','Noto_Sans_CJK_SC',sans-serif] text-[#1c1c1c]">
      <TitleBar />
      <TabBar />
      <Ribbon />
      <FormulaBar />
      <main className="relative flex-1">
        <svg className="absolute top-[352px] left-[393px]" width="20" height="30" viewBox="0 0 20 30" fill="#fff" stroke="#333" strokeWidth="1.3">
          <path d="M1.500 1.500v22l5-4.500 4 8.500 3.500-1.800-4-8h8z" />
        </svg>
      </main>
      <StatusArea />
      <Taskbar />
    </div>
  );
}
